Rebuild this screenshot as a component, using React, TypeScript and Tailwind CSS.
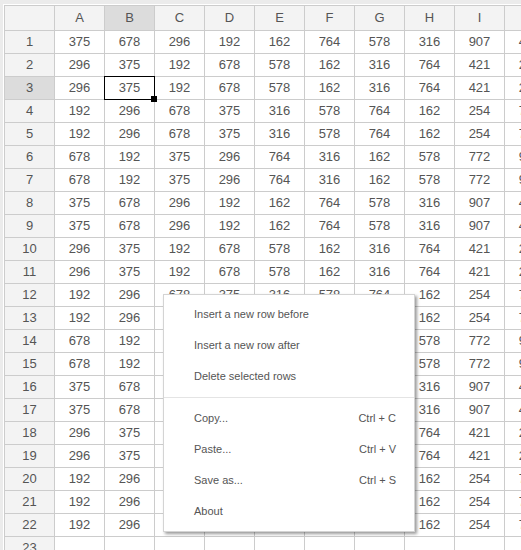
import React from 'react';

const COLS = ['A', 'B', 'C', 'D', 'E', 'F', 'G', 'H', 'I', 'J'];

const PATTERNS: Record<string, string[]> = {
  a: ['375', '678', '296', '192', '162', '764', '578', '316', '907', '421'],
  b: ['296', '375', '192', '678', '578', '162', '316', '764', '421', '254'],
  c: ['192', '296', '678', '375', '316', '578', '764', '162', '254', '772'],
  d: ['678', '192', '375', '296', '764', '316', '162', '578', '772', '907'],
};

// row order as seen in the sheet
const ROWS = ['a', 'b', 'b', 'c', 'c', 'd', 'd', 'a', 'a', 'b', 'b', 'c', 'c', 'd', 'd', 'a', 'a', 'b', 'b', 'c', 'c', 'c'];

const SEL_ROW = 2;
const SEL_COL = 1;

type MenuItem = { label: string; shortcut?: string } | 'sep';

const MENU: MenuItem[] = [
  { label: 'Insert a new row before' },
  { label: 'Insert a new row after' },
  { label: 'Delete selected rows' },
  'sep',
  { label: 'Copy...', shortcut: 'Ctrl + C' },
  { label: 'Paste...', shortcut: 'Ctrl + V' },
  { label: 'Save as...', shortcut: 'Ctrl + S' },
  { label: 'About' },
];

const ContextMenu: React.FC = () => (
  <div className="absolute left-[163px] top-[294px] w-[252px] bg-white border border-[#d4d4d4] py-[4px] shadow-[2px_2px_3px_rgba(0,0,0,0.4)] z-20">
    {MENU.map((item, i) =>
      item === 'sep' ? (
        <div key={i} className="h-px bg-[#e4e4e4] my-[5px]" />
      ) : (
        <div key={i} className="h-[31px] flex items-center justify-between pl-[30px] pr-[18px] text-[11px] text-[#555]">
          <span>{item.label}</span>
          {item.shortcut && <span>{item.shortcut}</span>}
        </div>
      )
    )}
  </div>
);

const App: React.FC = () => (
  <div
    className="relative w-[521px] h-[550px] overflow-hidden bg-[#ebebeb] pt-[4px] pl-[3px]"
    style={{ fontFamily: '"Liberation Sans", Arial, sans-serif' }}
  >
    <div className="border-l border-t border-white w-max">
      <div className="border-l border-t border-[#ccc] w-max text-[13px] text-[#555]">
        {/* HEADER */}
        <div className="flex">
          <div className="w-[50px] h-[25px] border-r border-b border-[#ccc] bg-[#f3f3f3]" />
          {COLS.map((c, ci) => (
            <div
              key={c}
              className={`w-[50px] h-[25px] border-r border-b border-[#ccc] flex items-center justify-center ${
                ci === SEL_COL ? 'bg-[#dcdcdc]' : 'bg-[#f3f3f3]'
              }`}
            >
              {c}
            </div>
          ))}
        </div>

        {/* BODY */}
        {[...ROWS, ''].map((p, ri) => (
          <div key={ri} className="flex">
            <div
              className={`w-[50px] h-[23px] border-r border-b border-[#ccc] flex items-center justify-center ${
                ri === SEL_ROW ? 'bg-[#dcdcdc]' : 'bg-[#f3f3f3]'
              }`}
            >
              {ri + 1}
            </div>
            {COLS.map((c, ci) => {
              const selected = ri === SEL_ROW && ci === SEL_COL;
              return (
                <div
                  key={c}
                  className={`relative w-[50px] h-[23px] border-r border-b border-[#ccc] bg-white flex items-center justify-center ${
                    selected ? 'z-10' : ''
                  }`}
                >
                  {p ? PATTERNS[p][ci] : ''}
                  {selected && (
                    <>
                      <div className="absolute left-[-1px] top-[-1px] w-[51px] h-[24px] border border-black" />
                      <div className="absolute right-[-3px] bottom-[-3px] w-[6px] h-[6px] bg-black" />
                    </>
                  )}
                </div>
              );
            })}
          </div>
        ))}
      </div>
    </div>

    <ContextMenu />
  </div>
);

export default App;
